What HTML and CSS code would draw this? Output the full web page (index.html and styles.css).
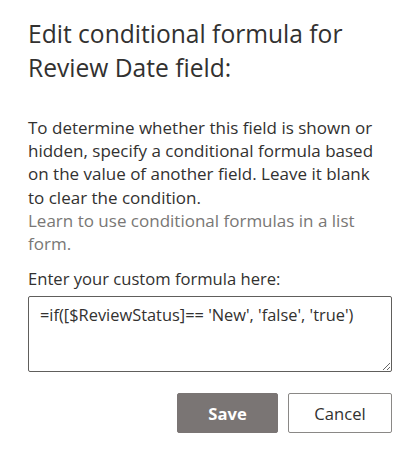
FILE: index.html
```html
<!DOCTYPE html>
<html lang="en">
<head>
<meta charset="utf-8">
<title>Edit conditional formula</title>
<link rel="stylesheet" href="styles.css">
</head>
<body>
<div class="dialog">
  <h1 class="title">Edit conditional formula for Review Date field:</h1>
  <p class="desc">To determine whether this field is shown or hidden, specify a conditional formula based on the value of another field. Leave it blank to clear the condition.<br><a class="learn" href="#">Learn to use conditional formulas in a list form.</a></p>
  <label class="label" for="formula">Enter your custom formula here:</label>
  <textarea class="formula" id="formula">=if([$ReviewStatus]== 'New', 'false', 'true')</textarea>
  <div class="actions">
    <button class="btn btn-primary">Save</button>
    <button class="btn btn-default">Cancel</button>
  </div>
</div>
</body>
</html>
```
FILE: styles.css
```css
html, body {
  margin: 0;
  padding: 0;
  background: #ffffff;
}
body {
  font-family: "Open Sans", "Noto Sans", sans-serif;
  color: #323130;
}
.dialog {
  width: 364px;
  padding: 17px 27px 0 28px;
  display: flex;
  flex-direction: column;
}
.title {
  margin: 0;
  font-size: 24.6px;
  font-weight: 400;
  line-height: 34px;
  color: #323130;
}
.desc {
  width: 352px;
  margin: 31px 0 0 0;
  font-size: 17px;
  line-height: 23.2px;
}
.learn {
  color: #797775;
  text-decoration: none;
}
.label {
  margin-top: 13px;
  font-size: 16.6px;
  line-height: 22px;
}
.formula {
  margin-top: 6px;
  box-sizing: border-box;
  width: 364px;
  height: 76px;
  padding: 7px 11px;
  border: 1px solid #605e5c;
  border-radius: 2px;
  font-family: "Open Sans", "Noto Sans", sans-serif;
  font-size: 16.4px;
  line-height: 22px;
  color: #323130;
  resize: vertical;
}
.actions {
  display: flex;
  justify-content: flex-end;
  gap: 10px;
  margin-top: 21px;
}
.btn {
  box-sizing: border-box;
  height: 40px;
  border-radius: 2px;
  font-family: "Open Sans", "Noto Sans", sans-serif;
  font-size: 16.6px;
  padding: 0;
}
.btn-primary {
  width: 101px;
  background: #7a7574;
  border: 1px solid #7a7574;
  color: #ffffff;
  font-weight: 700;
}
.btn-default {
  width: 104px;
  background: #ffffff;
  border: 1px solid #8a8886;
  color: #323130;
}
```
